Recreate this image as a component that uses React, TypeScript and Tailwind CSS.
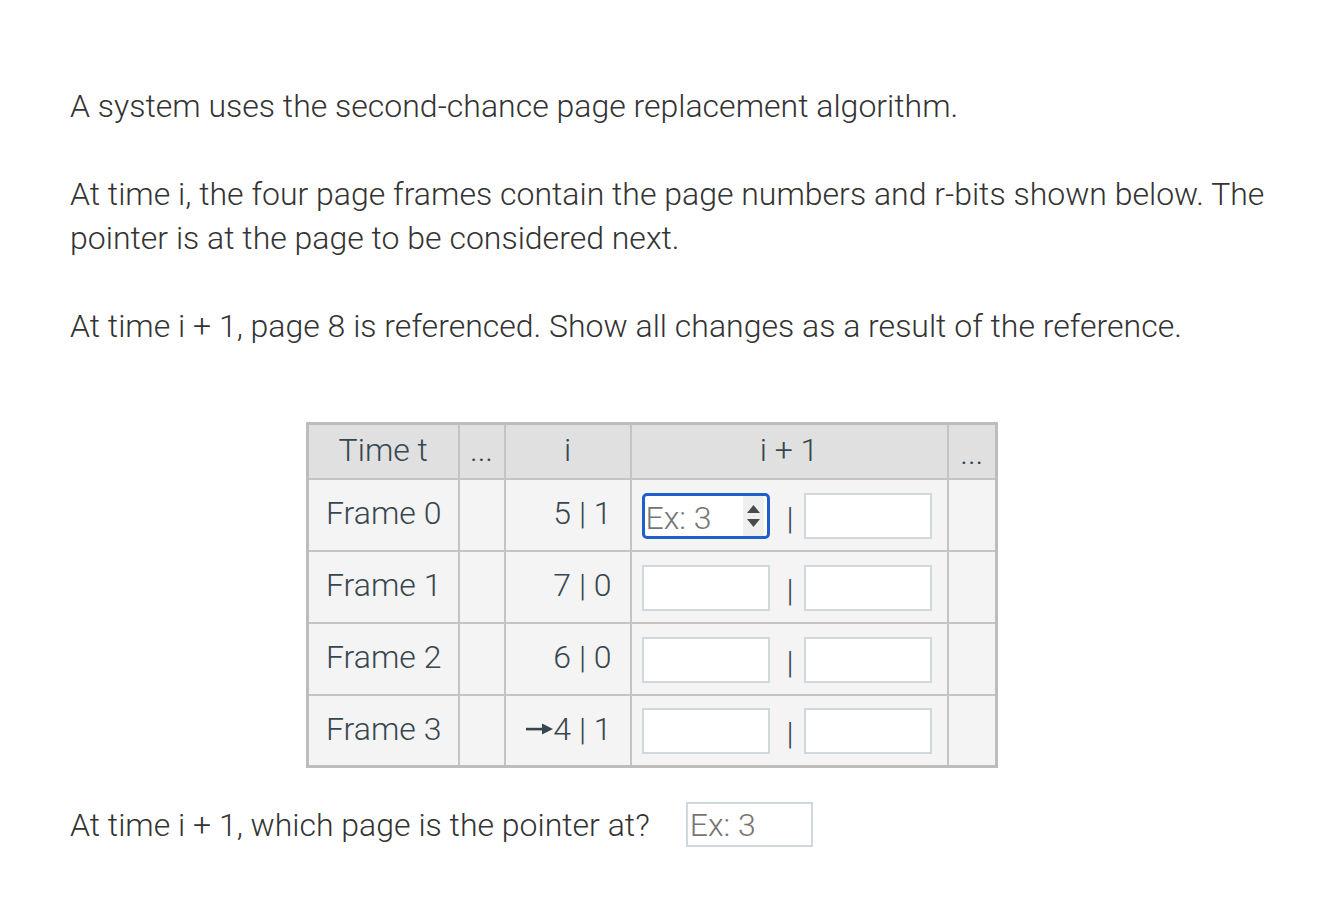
const rows = [
  { label: "Frame 0", value: "5 | 1", focused: true },
  { label: "Frame 1", value: "7 | 0" },
  { label: "Frame 2", value: "6 | 0" },
  { label: "Frame 3", value: "4 | 1", pointer: true },
];

function PointerArrow() {
  return (
    <svg width="27" height="14" viewBox="0 0 27 14" className="inline-block mb-[4px]">
      <rect x="0" y="5.8" width="18" height="2.6" fill="#37474f" />
      <path d="M16 1.5 L27 7 L16 12.5 Z" fill="#37474f" />
    </svg>
  );
}

function Spinner() {
  return (
    <div className="absolute right-[3px] top-0 bottom-0 w-[21px] bg-[#efefef] flex flex-col items-center justify-center gap-[6px]">
      <svg width="13" height="8" viewBox="0 0 13 8">
        <path d="M6.5 0 L13 8 L0 8 Z" fill="#4a4a4a" />
      </svg>
      <svg width="13" height="8" viewBox="0 0 13 8">
        <path d="M0 0 L13 0 L6.5 8 Z" fill="#4a4a4a" />
      </svg>
    </div>
  );
}

function PageInput({ focused }: { focused?: boolean }) {
  if (focused) {
    return (
      <div className="relative w-[128px] h-[46px] bg-white border-[3px] border-[#1f5fc9] rounded-[5px]">
        <input
          type="text"
          placeholder="Ex: 3"
          className="w-full h-full pl-[1px] bg-transparent text-[32px] font-light text-[#37474f] placeholder:text-[#757575] outline-none"
        />
        <Spinner />
      </div>
    );
  }
  return (
    <input
      type="text"
      className="w-[128px] h-[46px] bg-white border-2 border-[#cfd8dc] outline-none text-[32px] font-light px-1"
    />
  );
}

export default function App() {
  return (
    <div
      className="min-h-screen bg-white pt-[84px] pl-[70px] pr-[56px] text-[32px] font-light leading-[44px] text-[#333333]"
      style={{ fontFamily: "Roboto, 'Liberation Sans', sans-serif" }}
    >
      <p>A system uses the second-chance page replacement algorithm.</p>
      <p className="mt-[44px]">
        At time i, the four page frames contain the page numbers and r-bits shown below. The pointer is at the page to be considered next.
      </p>
      <p className="mt-[44px]">At time i + 1, page 8 is referenced. Show all changes as a result of the reference.</p>

      <table className="mt-[74px] ml-[236px] border-collapse border-[3px] border-[#bdbdbd] text-[#37474f]">
        <thead>
          <tr className="bg-[#e0e0e0] h-[55px]">
            <th className="w-[151px] border-2 border-[#c4c4c4] font-light text-center pb-[2px]">Time t</th>
            <th className="w-[46px] border-2 border-[#c4c4c4] font-light text-center pb-[2px]">...</th>
            <th className="w-[126px] border-2 border-[#c4c4c4] font-light text-center pb-[2px]">i</th>
            <th className="w-[317px] border-2 border-[#c4c4c4] font-light text-center pb-[2px]">i + 1</th>
            <th className="w-[49px] border-2 border-[#c4c4c4] font-light text-center align-bottom pb-[3px]">...</th>
          </tr>
        </thead>
        <tbody>
          {rows.map((r) => (
            <tr key={r.label} className="bg-[#f4f4f4] h-[72px]">
              <td className="border-2 border-[#c4c4c4] pl-[17px] pb-[3px]">{r.label}</td>
              <td className="border-2 border-[#c4c4c4]"></td>
              <td className="border-2 border-[#c4c4c4] text-right pr-[18px] pb-[3px] whitespace-nowrap">
                {r.pointer && <PointerArrow />}
                {r.value}
              </td>
              <td className="border-2 border-[#c4c4c4] pl-[10px] pt-[2px]">
                <div className="flex items-center">
                  <PageInput focused={r.focused} />
                  <span className="ml-[17px] mr-[10px] pt-[4px]">|</span>
                  <PageInput />
                </div>
              </td>
              <td className="border-2 border-[#c4c4c4]"></td>
            </tr>
          ))}
        </tbody>
      </table>

      <div className="mt-[34px] flex items-center">
        <span>At time i + 1, which page is the pointer at?</span>
        <input
          type="text"
          placeholder="Ex: 3"
          className="ml-[36px] w-[127px] h-[45px] bg-white border-2 border-[#cfd8dc] outline-none px-[2px] text-[32px] font-light placeholder:text-[#757575]"
        />
      </div>
    </div>
  );
}
